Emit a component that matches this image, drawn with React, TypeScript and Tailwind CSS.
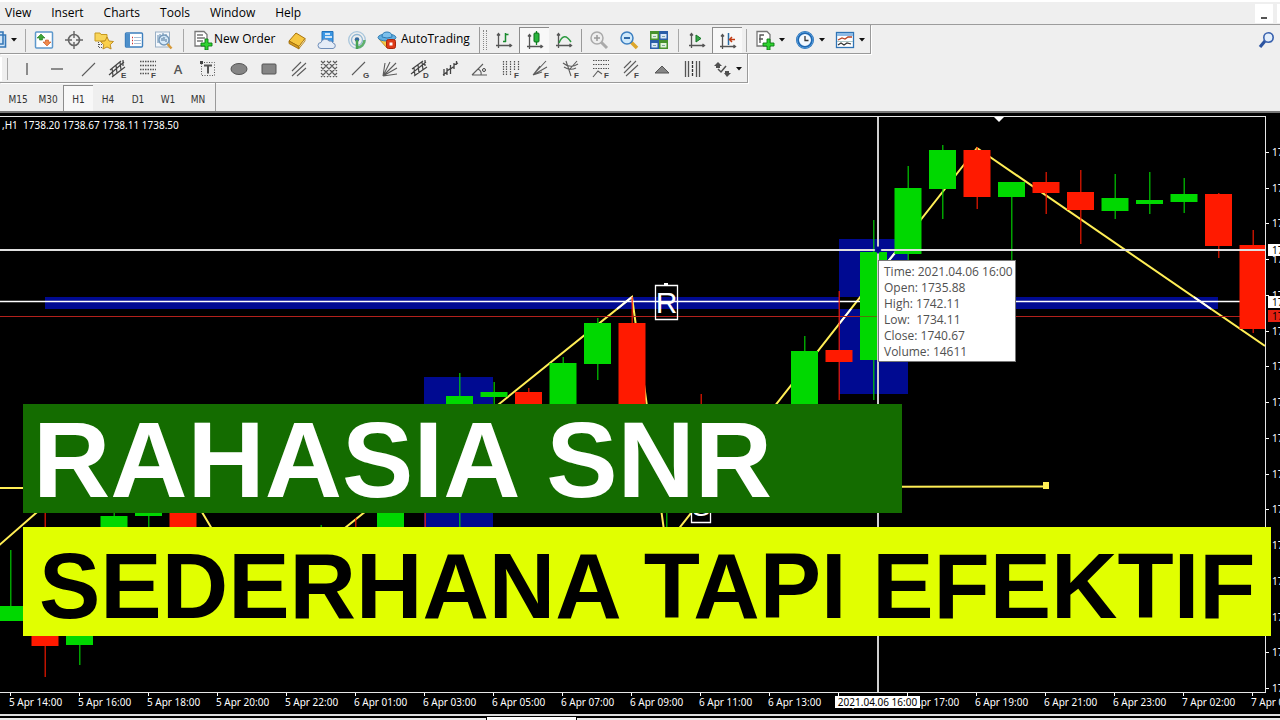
import React from "react";

type Kids = { children?: React.ReactNode };

const menuItems = ["View", "Insert", "Charts", "Tools", "Window", "Help"];

function Icon({ children }: Kids) {
  return (
    <svg width="20" height="20" viewBox="0 0 20 20" fill="none" className="shrink-0" aria-hidden="true">
      {children}
    </svg>
  );
}

function ToolButton({ label, pressed, children }: Kids & { label: string; pressed?: boolean }) {
  return (
    <button
      type="button"
      aria-label={label}
      aria-pressed={pressed}
      className={
        pressed
          ? "flex h-[26px] w-[30px] shrink-0 items-center justify-center border-t border-l border-[#8c8c8c] bg-[#f8f8f8]"
          : "flex h-[26px] w-[30px] shrink-0 items-center justify-center"
      }
    >
      {children}
    </button>
  );
}

function MenuButton({ label, children }: Kids & { label: string }) {
  return (
    <button type="button" aria-label={label} className="flex h-[26px] w-10 shrink-0 items-center gap-[4px] pl-[5px]">
      {children}
      <Caret />
    </button>
  );
}

function Caret() {
  return (
    <svg width="6" height="4" viewBox="0 0 6 4" className="shrink-0" aria-hidden="true">
      <path d="M0 0h6L3 3.6z" fill="#111" />
    </svg>
  );
}

function Separator() {
  return (
    <span className="flex w-2 shrink-0 justify-center">
      <span className="h-[23px] w-px bg-[#a8a8a8]" />
    </span>
  );
}

function Axes() {
  return <path d="M4.500 4v14M2 15.500h15M3 5.500l1.500-2 1.500 2M15.500 14l2 1.500-2 1.500" stroke="#555" strokeWidth="1.300" />;
}

function Plus() {
  return <path d="M12 9h3v4h4v3h-4v4h-3v-4H8v-3h4z" fill="#2fd32f" stroke="#0a7a12" strokeWidth="0.900" />;
}

function Sub({ l }: { l: string }) {
  return (
    <text x="13" y="19" fontSize="8" fontWeight="700" fill="#444" fontFamily="Liberation Sans, sans-serif">
      {l}
    </text>
  );
}

const g = { stroke: "#5c5c5c", strokeWidth: 1.1 };

const drawingTools: { name: string; icon: React.ReactNode }[] = [
  { name: "Vertical line", icon: <path d="M10 4v12" stroke="#555" strokeWidth="1.300" /> },
  { name: "Horizontal line", icon: <path d="M4 10h12" stroke="#555" strokeWidth="1.300" /> },
  { name: "Trendline", icon: <path d="M4 17L17 4" {...g} /> },
  {
    name: "Equidistant channel",
    icon: (
      <>
        <path d="M1 16L16 3M2 11L13 2M4 18L17 8M4 9l1 8M8 6l1 8M12 3l1 8M15 1v6" stroke="#444" strokeWidth="1.200" />
        <Sub l="E" />
      </>
    ),
  },
  {
    name: "Fibonacci retracement",
    icon: (
      <>
        <path d="M2 2.500h16M2 6.500h16M2 10.500h16M2 14.500h9" stroke="#555" strokeDasharray="1.500 1" strokeWidth="1.300" />
        <Sub l="F" />
      </>
    ),
  },
  {
    name: "Text",
    icon: (
      <text x="10" y="15" textAnchor="middle" fontSize="13" fontWeight="600" fill="#555" fontFamily="Open Sans, sans-serif">
        A
      </text>
    ),
  },
  {
    name: "Text label",
    icon: (
      <>
        <rect x="3.500" y="3.500" width="13" height="13" stroke="#555" strokeDasharray="1 1.500" />
        <path d="M2 2h3v3H2z" fill="#444" />
        <path d="M6 6.500h8M10 6.500v8" stroke="#555" strokeWidth="2" />
      </>
    ),
  },
  { name: "Ellipse", icon: <ellipse cx="10" cy="10" rx="8" ry="5.500" fill="#858585" stroke="#555" /> },
  { name: "Rectangle", icon: <rect x="3" y="5" width="14" height="10" rx="1" fill="#858585" stroke="#555" /> },
  { name: "Channel", icon: <path d="M3 12L12 3M3 17L17 4M8 17l9-8" {...g} /> },
  {
    name: "Gann grid",
    icon: (
      <path
        d="M2 6l4-4M2 12L12 2M2 18L18 2M8 18L18 8M14 18l4-4M2 14l4 4M2 8l10 10M2 2l16 16M8 2l10 10M14 2l4 4"
        {...g}
      />
    ),
  },
  {
    name: "Gann line",
    icon: (
      <>
        <path d="M2 16L15 3" {...g} />
        <Sub l="G" />
      </>
    ),
  },
  { name: "Gann fan", icon: <path d="M3 17L5 4M3 17L10 3M3 17L16 4M3 17l14-8M3 17l14-2" {...g} /> },
  {
    name: "Standard deviation channel",
    icon: (
      <>
        <path d="M1 15L16 3M2 10L13 2M4 17L17 8M4 9l1 8M8 6l1 8M12 3l1 8M15 1v6" stroke="#444" strokeWidth="1.200" />
        <Sub l="D" />
      </>
    ),
  },
  { name: "Regression", icon: <path d="M4 10v7M3 16l4-3M7 9v7M7 12l4-3M10.500 6v9M10.500 10l4-3M14 4v6M14 6l4-2M16.500 2v4" stroke="#444" strokeWidth="1.300" /> },
  {
    name: "Trend by angle",
    icon: (
      <>
        <path d="M2 16h15M2 16L13 5M8 10q4 2 3 6" {...g} />
        <circle cx="14" cy="11" r="1.500" stroke="#444" />
      </>
    ),
  },
  {
    name: "Fibonacci time zones",
    icon: (
      <>
        <path d="M2.500 2v15M5.500 2v15M9.500 2v15M13.500 2v9M17.500 2v9" stroke="#555" strokeDasharray="1.500 1" strokeWidth="1.200" />
        <Sub l="F" />
      </>
    ),
  },
  {
    name: "Fibonacci fan",
    icon: (
      <>
        <path d="M2 16L15 2M2 16l14-8M2 16L9 7M2 16l9-3" {...g} />
        <Sub l="F" />
      </>
    ),
  },
  {
    name: "Fibonacci arcs",
    icon: (
      <>
        <path d="M2 4q7 6 15 1M3 8q6 4 12 1M5 2l5 15M16 2L8 11" {...g} />
        <Sub l="F" />
      </>
    ),
  },
  {
    name: "Fibonacci expansion",
    icon: (
      <>
        <path d="M2 1.500h16M2 5.500h16M2 9.500h16" stroke="#555" strokeDasharray="1.500 1" strokeWidth="1.200" />
        <path d="M2 18l5-6 4 3" {...g} />
        <Sub l="F" />
      </>
    ),
  },
  {
    name: "Fibonacci channel",
    icon: (
      <>
        <path d="M3 9L10 2M3 14L15 2M5 17L17 6" {...g} />
        <Sub l="F" />
      </>
    ),
  },
  { name: "Triangle", icon: <path d="M3 14l7-7 7 7z" fill="#858585" stroke="#555" /> },
  {
    name: "Cycle lines",
    icon: (
      <>
        <path d="M3.500 2v16M6.500 2v16M14.500 2v16M17.500 2v16" stroke="#555" strokeWidth="1.300" />
        <path d="M10.500 2v16" stroke="#333" strokeWidth="1.300" strokeDasharray="3 1" />
      </>
    ),
  },
];

const timeframes = ["M15", "M30", "H1", "H4", "D1", "W1", "MN"];

/* x, wick top, body top, body bottom, wick bottom, rising */
const candles: [number, number, number, number, number, boolean][] = [
  [10.5, 550, 606, 621, 621, true],
  [45, 512, 600, 646, 677, false],
  [79.5, 590, 600, 645, 665, true],
  [114, 508, 516, 560, 570, true],
  [148.5, 480, 490, 516, 545, true],
  [183, 480, 490, 560, 570, false],
  [321, 525, 535, 560, 570, true],
  [355.5, 518, 535, 560, 570, false],
  [390.5, 490, 500, 560, 570, true],
  [425, 495, 545, 560, 570, false],
  [459.5, 373, 396, 513, 560, true],
  [494, 382, 392, 397, 410, true],
  [528.5, 388, 392, 415, 420, false],
  [563, 357, 363, 415, 420, true],
  [597.5, 318, 323, 364, 380, true],
  [632, 297, 323, 470, 480, false],
  [666.5, 480, 535, 560, 570, true],
  [701, 394, 420, 460, 470, false],
  [804.5, 336, 351, 420, 430, true],
  [839, 291, 350, 362, 400, false],
  [873.5, 220, 252, 360, 400, true],
  [908, 166, 188, 254, 262, true],
  [942.5, 145, 150, 189, 219, true],
  [977, 147, 150, 197, 209, false],
  [1011.5, 182, 182, 197, 262, true],
  [1046, 172, 182, 193, 214, false],
  [1080.5, 170, 192, 210, 244, false],
  [1115, 174, 198, 211, 219, true],
  [1149.5, 172, 200, 204, 214, true],
  [1184, 178, 194, 202, 213, true],
  [1218.5, 193, 194, 246, 258, false],
  [1253, 230, 245, 329, 333, false],
];

const times = [
  "5 Apr 14:00", "5 Apr 16:00", "5 Apr 18:00", "5 Apr 20:00", "5 Apr 22:00", "6 Apr 01:00", "6 Apr 03:00",
  "6 Apr 05:00", "6 Apr 07:00", "6 Apr 09:00", "6 Apr 11:00", "6 Apr 13:00", "6 Apr 15:00", "6 Apr 17:00",
  "6 Apr 19:00", "6 Apr 21:00", "6 Apr 23:00", "7 Apr 02:00", "7 Apr 04:00",
];

const tooltipRows = [
  "Time: 2021.04.06 16:00",
  "Open: 1735.88",
  "High: 1742.11",
  "Low:  1734.11",
  "Close: 1740.67",
  "Volume: 14611",
];

const priceTicks = Array.from({ length: 16 }, (_, i) => i);

function StandardToolbar() {
  return (
    <div className="flex h-[29px] items-stretch">
      <div className="flex items-center border-r border-b border-[#9a9a9a] pt-[2px] shadow-[1px_1px_0_#fff]">
        <button type="button" aria-label="Profiles" className="flex h-[26px] w-[21px] items-center gap-1">
          <svg width="7" height="20" viewBox="13 0 7 20" fill="none" aria-hidden="true">
            <path d="M10 2h6v12h-6M13 5h5.500v12H11" stroke="#3778b8" strokeWidth="1.600" fill="#d6e8f8" />
          </svg>
          <Caret />
        </button>
        <Separator />
        <ToolButton label="Market Watch">
          <Icon>
            <rect x="1.500" y="2" width="17" height="16" rx="1" fill="#fff" stroke="#5d98cc" strokeWidth="1.500" />
            <path d="M7 4l4 4H8.500v2h-3V8H3z" fill="#3fa63a" stroke="#227a20" strokeWidth="0.600" />
            <path d="M13 16l-4-4h2.500v-2h3v2H17z" fill="#f08a4a" stroke="#c4501c" strokeWidth="0.600" />
          </Icon>
        </ToolButton>
        <ToolButton label="Data Window">
          <Icon>
            <circle cx="10" cy="10" r="5.500" stroke="#666" strokeWidth="1.600" />
            <path d="M10 1v7M10 12v7M1 10h7M12 10h7" stroke="#666" strokeWidth="1.400" />
          </Icon>
        </ToolButton>
        <ToolButton label="Navigator">
          <Icon>
            <path d="M1 3h5l1 1.500h6V11H1z" fill="#f8d55a" stroke="#c79a20" />
            <path d="M4.500 12v6M5 14.500h4M5 17.500h4" stroke="#555" strokeDasharray="1 1" />
            <path d="M13 7l2 4 4.500.500-3.300 3.200.9 4.300L13 17l-4.100 2 .9-4.300L6.500 11.500 11 11z" fill="#fbd04a" stroke="#b98618" strokeWidth="0.900" />
          </Icon>
        </ToolButton>
        <ToolButton label="Terminal">
          <Icon>
            <rect x="1.500" y="3" width="17" height="14" rx="1" fill="#fff" stroke="#3d7fbd" strokeWidth="1.400" />
            <path d="M2 3.500h4V17H2z" fill="#4d8fca" />
            <path d="M8 7.500h1M8 10.500h1M8 13.500h1" stroke="#c33" strokeWidth="1.500" />
            <path d="M10 7.500h7M10 10.500h7M10 13.500h7" stroke="#a9bfd6" strokeWidth="1" />
          </Icon>
        </ToolButton>
        <ToolButton label="Strategy Tester">
          <Icon>
            <rect x="1.500" y="2" width="14" height="15" fill="#f4f8fc" stroke="#9ab0c6" />
            <path d="M4 5v8M6 4v4M9 3v6M12 4v4" stroke="#5f88ae" />
            <circle cx="10" cy="10" r="5" fill="#cfe6f8" fillOpacity="0.800" stroke="#7397b8" strokeWidth="1.400" />
            <path d="M8 8v3M10 7v4M12 9v3" stroke="#4c7396" />
            <path d="M13.500 14l4 4.500" stroke="#d79a3a" strokeWidth="2.500" />
          </Icon>
        </ToolButton>
        <Separator />
        <button type="button" className="flex h-[26px] w-[95px] items-center gap-[1px] pl-[6px] whitespace-nowrap">
          <Icon>
            <path d="M2 1.500h9l3 3V16H2z" fill="#fff" stroke="#777" strokeWidth="1.300" />
            <path d="M4 5h6M4 8h8M4 11h6" stroke="#777" strokeWidth="1.300" />
            <Plus />
          </Icon>
          <span className="pb-[2px]">New Order</span>
        </button>
        <ToolButton label="MetaEditor">
          <Icon>
            <path d="M2 11l7-8 9 5.500-6 8z" fill="#f6c640" stroke="#a8740c" />
            <path d="M2 11l10 5.500v2.500L2 13.500z" fill="#d59a1c" stroke="#9a6a0a" strokeWidth="0.800" />
            <path d="M12 16.500l6-8V11l-6 7.500z" fill="#fff0b8" stroke="#a8740c" strokeWidth="0.800" />
          </Icon>
        </ToolButton>
        <ToolButton label="Virtual hosting">
          <Icon>
            <path d="M5 1.500h11V12H5z" fill="#3c97e4" stroke="#2272bb" />
            <path d="M8 4h5M8 7h7" stroke="#fff" strokeWidth="1.500" />
            <path d="M4 18.500a3 3 0 010-6 4.500 4.500 0 018-1.500 3.500 3.500 0 014 2 2.800 2.800 0 010 5.500z" fill="#e4ecf7" stroke="#6e8db8" />
          </Icon>
        </ToolButton>
        <ToolButton label="Signals">
          <Icon>
            <circle cx="10" cy="10" r="8.300" stroke="#a8c6dc" strokeWidth="1.300" />
            <circle cx="10" cy="10" r="5.500" stroke="#8fb6d2" strokeWidth="1.300" />
            <path d="M10 17.500a7.500 7.500 0 007.500-7.500" stroke="#5fb06c" strokeWidth="2.500" />
            <circle cx="10" cy="9.500" r="2.300" fill="#356b9e" />
            <path d="M10 10v9" stroke="#47a252" strokeWidth="2.500" />
          </Icon>
        </ToolButton>
        <button type="button" className="flex h-[26px] w-[107px] items-center gap-1 pl-[5px] whitespace-nowrap">
          <Icon>
            <path d="M2 9l8 9 8-9z" fill="#f8cb45" stroke="#c0902a" />
            <ellipse cx="10" cy="7.500" rx="9" ry="3.500" fill="#62aee0" stroke="#2f7db5" />
            <path d="M5 7q0-5 5-5t5 5q-5 2-10 0z" fill="#7cc0ec" stroke="#2f7db5" />
            <rect x="9.500" y="9.500" width="9" height="9" rx="2" fill="#de3b18" stroke="#a82407" />
            <rect x="12.500" y="12.500" width="3" height="3" fill="#fff" />
          </Icon>
          <span className="pb-[2px]">AutoTrading</span>
        </button>
        <span className="flex w-[10px] shrink-0 self-stretch border-l border-[#9a9a9a] py-[3px] pl-[3px]">
          <span className="w-1 border-x border-dotted border-[#888]" />
        </span>
        <ToolButton label="Bar chart">
          <Icon>
            <Axes />
            <path d="M11.500 3v9M9 11.500h3M11 4.500h3.500" stroke="#178a2c" strokeWidth="1.500" />
          </Icon>
        </ToolButton>
        <ToolButton label="Candlesticks" pressed>
          <Icon>
            <Axes />
            <path d="M11.500 0v14" stroke="#128a22" strokeWidth="1.300" />
            <rect x="9" y="2" width="5" height="9" rx="1" fill="#28b53c" stroke="#0c6b1b" />
          </Icon>
        </ToolButton>
        <ToolButton label="Line chart">
          <Icon>
            <Axes />
            <path d="M5 13q5-12 12-1" stroke="#2c9a40" strokeWidth="1.500" />
          </Icon>
        </ToolButton>
        <span className="mx-[2px] h-[23px] w-px shrink-0 bg-[#9a9a9a]" />
        <ToolButton label="Zoom In">
          <Icon>
            <path d="M12 12l6 6" stroke="#aaa" strokeWidth="3" />
            <circle cx="8" cy="8" r="6" fill="#eee" stroke="#aaa" strokeWidth="1.500" />
            <path d="M5 8h6M8 5v6" stroke="#999" strokeWidth="1.500" />
          </Icon>
        </ToolButton>
        <ToolButton label="Zoom Out">
          <Icon>
            <path d="M12 12l6 6" stroke="#dca62c" strokeWidth="3.500" />
            <circle cx="8" cy="8" r="6" fill="#cfe9fb" stroke="#3c7fc0" strokeWidth="1.500" />
            <path d="M5 8h6" stroke="#205c9e" strokeWidth="1.800" />
          </Icon>
        </ToolButton>
        <ToolButton label="Tile Windows">
          <Icon>
            <path d="M1 1h9v9H1zM10 10h9v9h-9z" fill="#47922c" />
            <path d="M10 1h9v9h-9zM1 10h9v9H1z" fill="#2a5ea8" />
            <path d="M2.500 4h6v4.500h-6zM11.500 13h6v4.500h-6z" fill="#e3f4db" />
            <path d="M11.500 4h6v4.500h-6zM2.500 13h6v4.500h-6z" fill="#dbe9fa" />
            <path d="M4 6.500h3M13 6.500h3M4 15.500h3M13 15.500h3" stroke="#7fa6a0" />
          </Icon>
        </ToolButton>
        <Separator />
        <ToolButton label="Auto Scroll">
          <Icon>
            <Axes />
            <path d="M9 5l5 3.500L9 12z" fill="#35a848" stroke="#137523" />
          </Icon>
        </ToolButton>
        <ToolButton label="Chart Shift" pressed>
          <Icon>
            <Axes />
            <path d="M10.500 2v12" stroke="#2c6da4" strokeWidth="1.500" />
            <path d="M17 8.500h-5M14 6l-2.500 2.500L14 11" stroke="#c23a12" strokeWidth="1.500" />
          </Icon>
        </ToolButton>
        <Separator />
        <MenuButton label="Indicators">
          <Icon>
            <path d="M2 1.500h10l3 3V16H2z" fill="#fff" stroke="#777" strokeWidth="1.300" />
            <path d="M5 13V5h4M4 9h4" stroke="#555" strokeWidth="1.300" />
            <Plus />
          </Icon>
        </MenuButton>
        <MenuButton label="Periods">
          <Icon>
            <circle cx="10" cy="10" r="7.500" fill="#f2f8fe" stroke="#1e68b2" strokeWidth="3" />
            <circle cx="10" cy="10" r="8" stroke="#65a9e4" strokeWidth="0.800" />
            <path d="M10 6v4.500h3.500" stroke="#333" strokeWidth="1.300" />
          </Icon>
        </MenuButton>
        <MenuButton label="Templates">
          <Icon>
            <rect x="1.500" y="2.500" width="17" height="15" fill="#fff" stroke="#2f74b5" strokeWidth="1.300" />
            <path d="M2 3h16v3H2z" fill="#8dbbe6" />
            <path d="M3 10l4-2 3 1 3-2h4" stroke="#b54224" strokeWidth="1.300" />
            <path d="M3 15l3-2 3 2 3-2 4 1" stroke="#333" strokeWidth="1.200" />
            <path d="M2 11.500h16" stroke="#9bb" strokeWidth="0.800" />
          </Icon>
        </MenuButton>
      </div>
      <button type="button" aria-label="Search" className="mr-1 ml-auto flex w-5 items-center">
        <Icon>
          <path d="M9 11l-5 6" stroke="#2c54a0" strokeWidth="3.200" />
          <circle cx="12.500" cy="7.500" r="4.700" fill="#e3eefb" stroke="#3a62ae" strokeWidth="1.600" />
        </Icon>
      </button>
    </div>
  );
}

function Plot() {
  return (
    <svg
      className="absolute inset-0 h-full w-full"
      viewBox="0 117 1265 575"
      preserveAspectRatio="xMinYMin slice"
      role="img"
      aria-label="Candlestick chart, H1"
    >
      <path fillRule="evenodd" fill="#000a91" d="M45 297H1218V309H45ZM839 239H908V394H839Z" />
      <path fill="#000a91" d="M424 377H493V540H424Z" />
      <path d="M994 117h10l-5 5z" fill="#fff" />
      <g stroke="#ffee55" strokeWidth="2" fill="none">
        <path d="M0 488L1046 486.500" />
        <path d="M-4 548L60 492L190 492L215 534" />
        <path d="M330 540L632 297L666 545L977 148L1265 346" />
      </g>
      <path d="M617 309L632 297M839 324L851 309M885 265L895 253M1194 297L1211 309" stroke="#fff" strokeWidth="2" />
      <path d="M1043 482h6v7h-6z" fill="#ffee55" />
      <path d="M0 301.500H1265" stroke="#fff" strokeWidth="1.500" />
      <path d="M0 316.500H1265" stroke="#b3211c" />
      {candles.map(([x, wt, bt, bb, wb, up]) => (
        <g key={x} fill={up ? "#00d800" : "#ff1a00"}>
          <path d={`M${x - 0.5} ${wt}h1.500V${wb}h-1.500z`} opacity="0.750" />
          <path d={`M${x - 13.5} ${bt}h27V${bb}h-27z`} />
        </g>
      ))}
      <path d="M860 316.500H878" stroke="#4f7a08" />
      <path d="M0 250H1265" stroke="#e0e0e0" strokeWidth="2" />
      <path d="M878 117V692" stroke="#cfcfcf" strokeWidth="2" />
      <path d="M878 246l3.500 4-3.500 4-3.500-4z" fill="#000a91" />
      <g fill="none" stroke="#fff" strokeWidth="1.300">
        <path d="M655.500 285.500h22v34h-22zM691.500 490.500h19v32h-19z" />
      </g>
      <path d="M664 283h4v3h-4z" fill="#fff" />
      <g fill="#fff" fontFamily="Liberation Sans, sans-serif" textAnchor="middle">
        <text x="666.500" y="313" fontSize="30">R</text>
        <text x="701" y="516" fontSize="28">S</text>
      </g>
    </svg>
  );
}

function Headline() {
  return (
    <div className="absolute top-[291px] left-[23px] flex flex-col gap-[14px] font-['Liberation_Sans',sans-serif] font-bold whitespace-nowrap">
      <h1 className="flex h-[109px] w-[879px] items-center bg-[#146c00] pt-1 pl-[10px] text-[107px] leading-none text-white">
        RAHASIA SNR
      </h1>
      <h2 className="flex h-[109px] w-[1248px] items-center bg-[#e1ff00] pt-2 pl-4 text-[92px] leading-none text-black">
        SEDERHANA TAPI EFEKTIF
      </h2>
    </div>
  );
}

export default function App() {
  return (
    <div className="flex h-screen min-h-[640px] flex-col overflow-hidden bg-[#efefef] font-['Open_Sans','Noto_Sans',sans-serif] text-[12px] leading-4 text-black">
      <nav className="flex h-[25px] shrink-0 items-center gap-5 border-t-2 border-b border-t-white border-b-[#9c9c9c] pl-[5px]">
        {menuItems.map((m) => (
          <button key={m} type="button">
            {m}
          </button>
        ))}
        <div className="ml-auto flex gap-1 self-stretch pt-[2px] pb-px">
          <button type="button" aria-label="Minimize" className="flex w-[18px] items-end justify-center bg-white pb-1">
            <span className="h-[2px] w-[6px] bg-[#555]" />
          </button>
          <span className="w-[3px] bg-white" />
        </div>
      </nav>

      <div className="flex shrink-0 flex-col">
        <StandardToolbar />
        <div className="flex h-[29px]">
          <div className="flex items-center border-r border-b border-[#9a9a9a] pt-[2px] shadow-[1px_1px_0_#fff]">
            <span className="h-6 w-[2px] bg-white" />
            <span className="ml-[5px] h-[22px] w-px bg-[#a8a8a8]" />
            <div className="ml-1 flex w-[695px]">
              {drawingTools.map((t) => (
                <button key={t.name} type="button" aria-label={t.name} className="flex h-[26px] flex-1 items-center justify-center">
                  <Icon>{t.icon}</Icon>
                </button>
              ))}
            </div>
            <MenuButton label="Arrows">
              <Icon>
                <path d="M2 7l4-4 4 4H8v2H4V7zM12 14h1v-2h4v2h2l-4 4z" fill="#505050" />
                <path d="M6 10l3 3 5-6" stroke="#505050" strokeWidth="1.500" />
              </Icon>
            </MenuButton>
          </div>
        </div>
        <div className="flex h-7">
          <div className="flex border-r border-[#9a9a9a] pt-[2px] pr-[2px] pl-[3px] font-['DejaVu_Sans_Condensed','DejaVu_Sans',sans-serif] text-[10px] text-[#333]">
            {timeframes.map((t) => (
              <button
                key={t}
                type="button"
                aria-pressed={t === "H1"}
                className={
                  t === "H1"
                    ? "w-[30px] border-t border-l border-[#8c8c8c] bg-[#f8f8f8] pt-[2px]"
                    : "w-[30px] pt-[3px]"
                }
              >
                {t}
              </button>
            ))}
          </div>
        </div>
        <div className="h-[2px] bg-[#777]" />
      </div>

      <main className="relative flex min-h-0 flex-1 flex-col bg-black pt-[3px] font-['Noto_Sans','Open_Sans',sans-serif] text-[10px] text-white">
        <div className="flex min-h-0 flex-1">
          <div className="relative min-w-0 flex-1 overflow-hidden border-t border-r border-b border-[#e6e6e6]">
            <Plot />
            <p className="relative ml-[2px] whitespace-pre">,H1  1738.20 1738.67 1738.11 1738.50</p>
          </div>
          <div className="relative flex w-[14px] flex-col overflow-hidden pt-px pb-1">
            {priceTicks.map((i) => (
              <span key={i} className="flex min-h-0 flex-1 items-end">
                <span className="h-px w-[3px] shrink-0 bg-white" />
                <span className="-mb-[7px] ml-[3px]">17</span>
              </span>
            ))}
            <span className="absolute top-[128px] left-[2px] h-3 w-3 bg-white pl-1 leading-3 text-black">17</span>
            <span className="absolute top-[180px] left-[2px] h-3 w-3 bg-white pl-1 leading-3 text-black">17</span>
            <span className="absolute top-[194px] left-[2px] h-3 w-3 bg-[#e62010] pl-1 leading-3 text-black">17</span>
          </div>
        </div>
        <div className="relative flex h-[21px] shrink-0 overflow-hidden pl-[10px]">
          {times.map((t) => (
            <span key={t} className="w-[69px] shrink-0 whitespace-nowrap">
              <span className="block h-[3px] w-px bg-white" />
              <span className="-ml-px block leading-3">{t}</span>
            </span>
          ))}
          <span className="absolute top-[3px] left-[835px] w-[85px] bg-white text-center leading-3 text-black">
            2021.04.06 16:00
          </span>
        </div>
        <div className="flex h-[6px] shrink-0 flex-col border-t-2 border-[#dedede]">
          <div className="mt-px flex flex-1 bg-[#ececec]">
            <span className="w-[487px] border-t border-r border-black" />
            <span className="w-[89px] bg-white" />
            <span className="flex-1 border-t border-l border-black" />
          </div>
        </div>

        <div
          role="tooltip"
          className="absolute top-[147px] left-[878px] w-[138px] border border-[#767676] bg-white pt-[3px] pb-px pl-[5px] font-['Open_Sans','Noto_Sans',sans-serif] text-[12px] leading-4 whitespace-pre text-[#505050]"
        >
          {tooltipRows.map((r) => (
            <p key={r}>{r}</p>
          ))}
        </div>

        <Headline />
      </main>
    </div>
  );
}
